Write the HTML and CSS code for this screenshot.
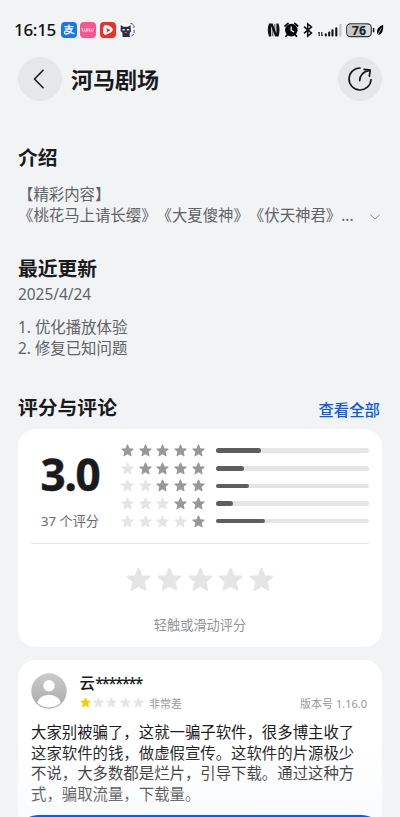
FILE: index.html
```
<!DOCTYPE html>
<html lang="zh-CN">
<head>
<meta charset="utf-8">
<title>河马剧场</title>
<link rel="stylesheet" href="styles.css">
</head>
<body>
<svg class="defs" aria-hidden="true">
  <symbol id="star" viewBox="0 0 24 24"><path d="M12 1.8 L14.9 8.9 L22.4 9.2 L16.7 14.1 L18.5 21.7 L12 17.8 L5.5 21.7 L7.3 14.1 L1.6 9.2 L9.1 8.9Z" fill="currentColor" stroke="currentColor" stroke-width="2" stroke-linejoin="round"/></symbol>
</svg>
<div class="screen">
  <div class="status">
    <span class="clock">16:15</span>
    <svg class="app" viewBox="0 0 16 16"><rect width="16" height="16" rx="4" fill="#1677f5"/><g fill="none" stroke="#fff" stroke-width="1.3" stroke-linecap="round"><path d="M4 4.7H12M8 3V7M4.5 7H11C10 9.6 7.8 12 5.2 12C2.8 12 2.8 8.9 5.4 9C7.8 9.1 10 10.7 13 11.6"/></g></svg>
    <svg class="app" viewBox="0 0 16 16"><rect width="16" height="16" rx="4" fill="#ff5291"/><path d="M2 6L2.5 9.2Q3.7 10.5 4.6 8.5V6.5M4.6 8.5Q5.3 10.6 6.7 9V6M7.8 6.2V9.6M9 6L9.4 9.2Q10.5 10.5 11.3 8.5V6.5M11.3 8.5Q12.2 10.5 13 9.2L13.5 6" fill="none" stroke="#ffd2e2" stroke-width="1"/></svg>
    <svg class="app" viewBox="0 0 16 16"><rect width="16" height="16" rx="4" fill="#f12d2a"/><path d="M5.2 2.9Q11 3.1 13 7.5Q12.5 10.9 5.2 13Q2.5 12 3.1 8Q3.1 3.6 5.2 2.9Z" fill="#fff"/><path d="M6 6L10.5 8L6.5 10.7L7.2 8.3Z" fill="#f12d2a"/></svg>
    <svg class="app" viewBox="0 0 16 16"><path d="M1 1L9 2V14H2Z" fill="#fff"/><path d="M.8 3L3.5 4.8H8L10.5 3L11 9.5L9.7 11V15H2.5V11L.6 9Z" fill="#302e43"/><path d="M2.4 7H4.8V8.6H2.4ZM6.8 7H9.2V8.6H6.8Z" fill="#f1cfd1"/><path d="M4.7 10H7V11H4.7Z" fill="#977985"/><path d="M10.5 1.5Q15 2 13.8 6M14 8Q15 12 11.5 14" fill="none" stroke="#45434a" stroke-width="1" stroke-dasharray="3 1"/></svg>
    <svg class="tray" viewBox="0 0 120 18">
      <path d="M3 2.6Q.6 9 3 15.4H5.2V5.1L9.1 15.4H12.5Q14.5 9 12.5 2.6H10.4V12.5L6.6 2.6Z" fill="#111"/><path d="M6.8 6.2V15.2M8.8 3V11.6" stroke="#111" stroke-width=".8"/>
      <circle cx="25.3" cy="9.1" r="6.3" fill="#080808"/><path d="M19 5L22 2.4M28.7 2.4L31.7 5M21.5 13.5L20 15.3M29 13.5L30.5 15.3" stroke="#080808" stroke-width="1.7" stroke-linecap="round"/><path d="M25.2 5.5V9.3L28.1 11" fill="none" stroke="#fff" stroke-width="1.3"/>
      <path d="M38 5.6L45.5 12.1L41.7 15.2V2.8L45.5 5.9L38 12.4" fill="none" stroke="#111" stroke-width="1.5"/>
      <path d="M53.2 11V15M55.8 11V15" stroke="#222" stroke-width="1.2"/><path d="M52.2 12.2L53.2 11M55.8 15L56.8 13.8" stroke="#222" fill="none" stroke-width=".9"/>
      <path d="M59.8 13.4V14.4M63.2 11.6V14.4M66.5 9.4V14.4M70.3 7.2V14.4" stroke="#111" stroke-width="2.1" stroke-linecap="round"/><path d="M74.4 3V15.5" stroke="#c3c5c8" stroke-width="2.2"/>
      <rect x="80.7" y="2.8" width="24.6" height="12.9" rx="3.9" fill="#dcdddf" stroke="#333" stroke-width="1.2"/><path d="M81.3 6.4Q81.3 3.4 84.4 3.4H99V15H84.4Q81.3 15 81.3 12Z" fill="#c6c7c9"/>
      <text x="93" y="13.7" text-anchor="middle" class="battery">76</text><path d="M107.6 7.6V10.8" stroke="#111" stroke-width="1.5" stroke-linecap="round"/>
      <path d="M117.2 3.7Q111 6 110.9 10.8Q111 13 112.6 14.1Q117.8 12.5 117.2 3.7Z" fill="#080808"/><path d="M111.2 15.2Q112.8 11 115.4 7.2" stroke="#f1f3f5" stroke-width=".7" fill="none"/>
    </svg>
  </div>

  <header class="topbar">
    <div class="round"><svg viewBox="0 0 44 44"><path d="M25.1 13.3L16.5 22L25.1 30.7" fill="none" stroke="#18191b" stroke-width="1.6" stroke-linecap="round" stroke-linejoin="round"/></svg></div>
    <h1>河马剧场</h1>
    <div class="round"><svg viewBox="0 0 44 44"><g fill="none" stroke="#18191b" stroke-width="1.7" stroke-linecap="round" stroke-linejoin="round"><path d="M22 11A11 11 0 1 0 33 22.7M21.7 23.6C21.6 18.6 25.5 14 32 13.4M26.1 12.3L32.2 13.1L31.4 19.2"/></g></svg></div>
  </header>

  <section class="intro">
    <h2>介绍</h2>
    <p class="tags">【精彩内容】</p>
    <div class="more"><p>《桃花马上请长缨》《大夏傻神》《伏天神君》...</p><svg viewBox="0 0 12 8"><path d="M1.5 1.8L6 6.1L10.5 1.8" fill="none" stroke="#8b8d90" stroke-width="1" stroke-linecap="round"/></svg></div>
  </section>

  <section class="update">
    <h2>最近更新</h2>
    <p class="date">2025/4/24</p>
    <p>1. 优化播放体验</p>
    <p>2. 修复已知问题</p>
  </section>

  <div class="heading"><h2>评分与评论</h2><a>查看全部</a></div>

  <section class="card ratings">
    <div class="summary">
      <div class="total"><div class="score">3.0</div><div class="count">37 个评分</div></div>
      <div class="bars">
        <div class="row"><div class="stars"><svg><use href="#star"/></svg><svg><use href="#star"/></svg><svg><use href="#star"/></svg><svg><use href="#star"/></svg><svg><use href="#star"/></svg></div><div class="track"><div class="fill" style="width:29.2%"></div></div></div>
        <div class="row"><div class="stars"><svg class="off"><use href="#star"/></svg><svg><use href="#star"/></svg><svg><use href="#star"/></svg><svg><use href="#star"/></svg><svg><use href="#star"/></svg></div><div class="track"><div class="fill" style="width:18.6%"></div></div></div>
        <div class="row"><div class="stars"><svg class="off"><use href="#star"/></svg><svg class="off"><use href="#star"/></svg><svg><use href="#star"/></svg><svg><use href="#star"/></svg><svg><use href="#star"/></svg></div><div class="track"><div class="fill" style="width:21.3%"></div></div></div>
        <div class="row"><div class="stars"><svg class="off"><use href="#star"/></svg><svg class="off"><use href="#star"/></svg><svg class="off"><use href="#star"/></svg><svg><use href="#star"/></svg><svg><use href="#star"/></svg></div><div class="track"><div class="fill" style="width:10.8%"></div></div></div>
        <div class="row"><div class="stars"><svg class="off"><use href="#star"/></svg><svg class="off"><use href="#star"/></svg><svg class="off"><use href="#star"/></svg><svg class="off"><use href="#star"/></svg><svg><use href="#star"/></svg></div><div class="track"><div class="fill" style="width:31.9%"></div></div></div>
      </div>
    </div>
    <div class="rate"><svg><use href="#star"/></svg><svg><use href="#star"/></svg><svg><use href="#star"/></svg><svg><use href="#star"/></svg><svg><use href="#star"/></svg></div>
    <p class="hint">轻触或滑动评分</p>
  </section>

  <section class="card review">
    <div class="author">
      <svg class="avatar" viewBox="0 0 36 36"><defs><linearGradient id="ag" x1="0" y1="0" x2="0" y2="1"><stop offset="0" stop-color="#cbcbcb"/><stop offset="1" stop-color="#a9a9a9"/></linearGradient><clipPath id="ac"><circle cx="18" cy="18" r="16.6"/></clipPath></defs><circle cx="18" cy="18" r="17.7" fill="url(#ag)"/><circle cx="18" cy="12.8" r="5.7" fill="#fff"/><ellipse cx="18" cy="31" rx="11.8" ry="9.2" fill="#fff" clip-path="url(#ac)"/></svg>
      <div class="who">
        <div class="name">云<span class="mask">*******</span></div>
        <div class="meta"><div class="mini"><svg class="on"><use href="#star"/></svg><svg><use href="#star"/></svg><svg><use href="#star"/></svg><svg><use href="#star"/></svg><svg><use href="#star"/></svg></div><span>非常差</span><span class="version">版本号 1.16.0</span></div>
      </div>
    </div>
    <p class="text">大家别被骗了，这就一骗子软件，很多博主收了<br>这家软件的钱，做虚假宣传。这软件的片源极少<br>不说，大多数都是烂片，引导下载。通过这种方<br>式，骗取流量，下载量。</p>
  </section>

  <div class="dock"><div class="install"></div></div>
</div>
</body>
</html>
```
FILE: styles.css
```
* { box-sizing: border-box; margin: 0; padding: 0; }
body {
  background: #f1f3f5;
  color: #191a1c;
  font-family: "Noto Sans", "Noto Sans CJK SC", sans-serif;
  text-spacing-trim: space-all;
}
svg { display: block; flex: none; }
.defs { position: absolute; width: 0; height: 0; }
.screen { position: relative; width: 400px; height: 817px; overflow: hidden; padding: 0 18px; }

.status { display: flex; align-items: center; height: 22px; margin-top: 19px; margin-left: -4px; margin-right: -4px; }
.clock { width: 46.7px; font-size: 17px; letter-spacing: -.3px; font-weight: 500; line-height: 22px; color: #111; }
.app { width: 16px; height: 16px; margin-right: 3.8px; }
.tray { width: 120px; height: 18px; margin-left: auto; }
.battery { font-size: 12.5px; font-weight: 700; fill: #222; }

.topbar { display: flex; align-items: center; height: 44px; margin-top: 16px; }
.round { width: 44px; height: 44px; border-radius: 50%; background: #e5e7ea; flex: none; }
h1 { flex: 1; padding-left: 9px; font-size: 22px; line-height: 30px; font-weight: 700; }

h2 { font-size: 19.8px; line-height: 28px; font-weight: 700; white-space: nowrap; }
.intro, .update { color: #606265; font-size: 15.4px; line-height: 21px; }
.intro h2, .update h2 { color: #191a1c; }
.intro { margin-top: 43px; height: 111px; }
.tags { margin-top: 12px; }
.more { display: flex; align-items: center; justify-content: space-between; }
.more p { white-space: nowrap; }
.more svg { width: 12px; height: 8px; margin: 3px 1.5px 0 0; }
.update { height: 139px; }
.update .date { margin-bottom: 12px; margin-top: 1px; }

.heading { display: flex; align-items: center; justify-content: space-between; height: 36px; margin: -1px 2px 0 0; }
.heading h2 { margin-top: -7px; }
.heading a { color: #0a59f7; font-size: 15.4px; line-height: 20px; font-weight: 500; }

.card { background: #fff; border-radius: 18px; width: 364px; }
.ratings { height: 218px; padding: 0 13px; }
.summary { display: flex; height: 115px; border-bottom: 1px solid #e5e5e5; }
.total { width: 78px; text-align: center; margin-right: 12px; padding-top: 18px; }
.score { font-size: 44px; line-height: 54px; font-weight: 700; letter-spacing: -1.3px; -webkit-text-stroke: .5px #191a1c; }
.count { color: #66686b; font-size: 13.2px; line-height: 20px; margin-top: 10px; white-space: nowrap; }
.bars { flex: 1; padding-top: 12.8px; }
.row { display: flex; align-items: center; height: 17.65px; }
.stars { display: flex; gap: 4.7px; width: 95px; color: #989898; flex: none; }
.stars svg { width: 13px; height: 13px; }
.stars .off { color: #e5e5e5; }
.track { flex: 1; height: 4.6px; border-radius: 3px; background: #e5e5e5; }
.fill { height: 100%; border-radius: 3px; background: #5e5e5e; }
.rate { display: flex; justify-content: center; gap: 5.8px; margin-top: 23px; color: #e5e5e5; }
.rate svg { width: 25px; height: 25px; }
.hint { text-align: center; font-size: 13.2px; line-height: 20px; margin-top: 23px; color: #929497; }

.review { height: 190px; margin-top: 13px; padding: 13px; }
.author { display: flex; }
.avatar { width: 36px; height: 36px; }
.who { flex: 1; padding-left: 12.5px; }
.name { font-size: 15.4px; line-height: 20px; font-weight: 500; margin-top: 1px; white-space: nowrap; }
.mask { letter-spacing: -1.75px; }
.meta { display: flex; align-items: center; height: 17px; font-size: 11px; color: #97999c; white-space: nowrap; }
.mini { display: flex; gap: 2.4px; color: #e5e5e5; margin-right: 5px; }
.mini svg { width: 11px; height: 11px; }
.mini .on { color: #f7ce00; }
.version { margin-left: auto; margin-right: 2px; font-size: 11px; }
.text { font-size: 15.4px; line-height: 20.7px; margin-top: 12px; white-space: nowrap; }

.dock { position: absolute; left: 0; right: 0; bottom: 0; height: 92px; padding: 89.5px 18px 0; background: linear-gradient(to bottom, rgba(244,246,249,0) 20%, rgba(244,246,249,.45) 95%); overflow: hidden; }
.install { height: 40px; border-radius: 20px; background: #0a59f7; }
```
